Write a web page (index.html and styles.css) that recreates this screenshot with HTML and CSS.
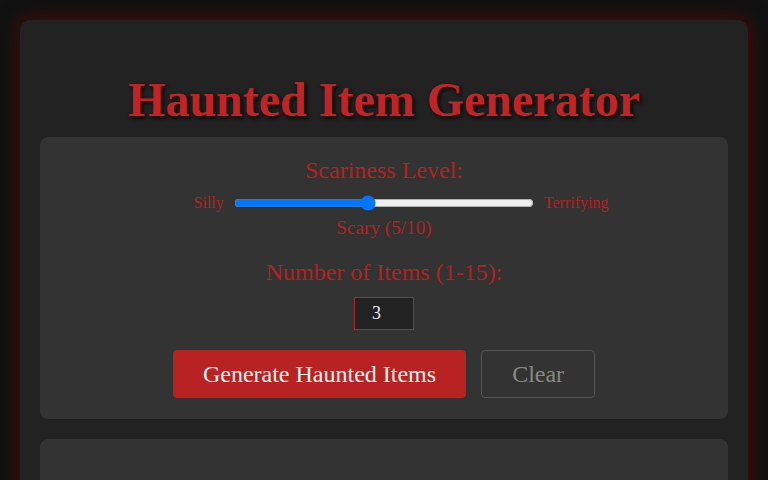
FILE: index.html
```html
<!DOCTYPE html>
<html lang="en">
<head>
<meta charset="utf-8">
<title>Haunted Item Generator</title>
<link rel="stylesheet" href="styles.css">
</head>
<body>
<div class="container">
  <h1 class="title">Haunted Item Generator</h1>
  <section class="panel controls">
    <div class="control-group">
      <label class="control-label" for="scariness">Scariness Level:</label>
      <div class="slider-row">
        <span class="slider-end">Silly</span>
        <input type="range" id="scariness" class="slider" min="1" max="10" value="5">
        <span class="slider-end">Terrifying</span>
      </div>
      <div class="slider-value">Scary (5/10)</div>
    </div>
    <div class="control-group">
      <label class="control-label" for="count">Number of Items (1-15):</label>
      <input type="number" id="count" class="count-input" min="1" max="15" value="3">
    </div>
    <div class="button-row">
      <button class="btn btn-primary">Generate Haunted Items</button>
      <button class="btn btn-secondary">Clear</button>
    </div>
  </section>
  <section class="panel results"></section>
</div>
</body>
</html>
```

FILE: styles.css
```css
html, body {
  margin: 0;
  background: #111111;
  font-family: "Liberation Serif", "Times New Roman", serif;
}

body {
  padding: 20px;
}

.container {
  background: #222222;
  border-radius: 10px;
  padding: 20px;
  box-shadow: 0 0 20px rgba(139, 0, 0, 0.55);
  min-height: 600px;
}

.title {
  margin: 32px 0 10px;
  text-align: center;
  font-size: 48px;
  font-weight: bold;
  color: #c12426;
  text-shadow: 2px 2px 4px #000000;
  line-height: 55px;
}

.panel {
  background: #333333;
  border-radius: 8px;
  padding: 20px;
  margin-bottom: 20px;
}

.controls {
  text-align: center;
  padding-bottom: 21px;
}

.control-group {
  margin-bottom: 20px;
}

.control-label {
  display: block;
  font-size: 24px;
  color: #b22222;
  line-height: 27px;
  margin-bottom: 8px;
}

.control-group + .control-group .control-label {
  margin-bottom: 11px;
}

.slider-row {
  display: flex;
  align-items: center;
  justify-content: center;
  gap: 10px;
  height: 21px;
  padding-left: 34px;
}

.slider-end {
  font-size: 16px;
  color: #b22222;
}

.slider {
  width: 300px;
  margin: 0;
}

.slider-value {
  margin-top: 4px;
  font-size: 19.2px;
  color: #b22222;
  line-height: 22px;
}

.count-input {
  width: 60px;
  box-sizing: border-box;
  padding: 5px;
  font-family: "Liberation Serif", serif;
  font-size: 18px;
  text-align: center;
  color: #eeeeee;
  background: #222222;
  border: 1px solid #a8283a;
  line-height: 21px;
}

.button-row {
  display: flex;
  justify-content: center;
  gap: 15px;
  margin-top: 20px;
}

.btn {
  font-family: "Liberation Serif", serif;
  font-size: 24px;
  line-height: 26px;
  padding: 10px 30px;
  border-radius: 4px;
  cursor: pointer;
}

.btn-primary {
  background: #b92222;
  color: #f2f2f2;
  border: 1px solid #b92222;
  padding: 10px 29px;
}

.btn-secondary {
  background: transparent;
  color: #888888;
  border: 1px solid #555555;
}

.results {
  min-height: 200px;
}
```
